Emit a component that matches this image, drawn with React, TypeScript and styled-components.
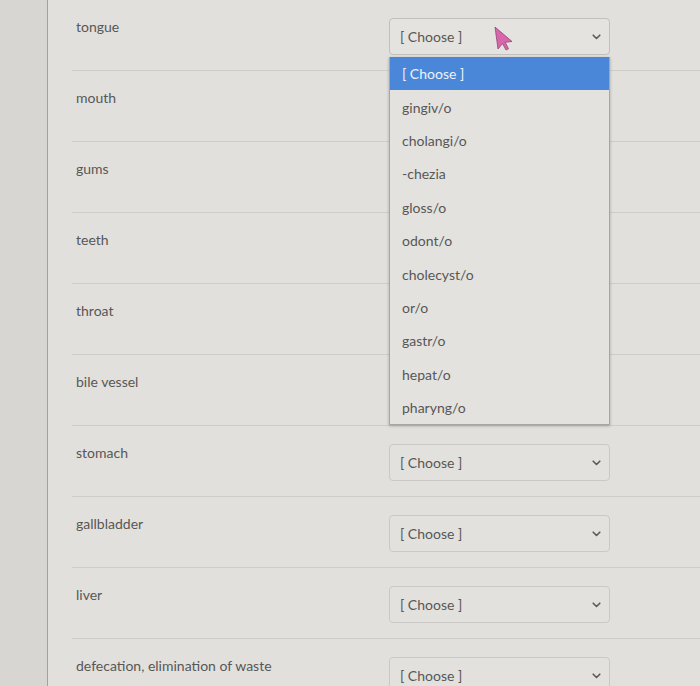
import React from "react";
import styled, {createGlobalStyle} from "styled-components";

const labels = [
    "tongue",
    "mouth",
    "gums",
    "teeth",
    "throat",
    "bile vessel",
    "stomach",
    "gallbladder",
    "liver",
    "defecation, elimination of waste",
];

const options = [
    "[ Choose ]",
    "gingiv/o",
    "cholangi/o",
    "-chezia",
    "gloss/o",
    "odont/o",
    "cholecyst/o",
    "or/o",
    "gastr/o",
    "hepat/o",
    "pharyng/o",
];

// rows whose select sits under the open list
const covered = (i: number) => i > 0 && i < 6;

const Chevron: React.FC = () => (
    <svg width="9" height="6" viewBox="0 0 9 6">
        <path d="M1.2 1.2 L4.5 4.5 L7.8 1.2" fill="none" stroke="#5a5a5a" strokeWidth="1.6" strokeLinecap="round"
              strokeLinejoin="round"/>
    </svg>
);

const Cursor: React.FC = () => (
    <CursorSvg width="20" height="26" viewBox="0 0 20 26">
        <path d="M2 1 L5 23 L9.5 17.5 L13 24 L15.5 22.8 L12.2 16.3 L19 15.5 Z" fill="#d965aa" stroke="#8a4a72"
              strokeWidth="0.8" strokeLinejoin="round"/>
    </CursorSvg>
);

export default function App() {
    return (
        <>
            <GlobalStyle/>
            <Page>
                <Gutter/>
                <Content>
                    {labels.map((label, i) => (
                        <Row key={label}>
                            <Label>{label}</Label>
                            <SelectWrap>
                                <SelectBox $open={i === 0} $hidden={covered(i)}>
                                    <span>[ Choose ]</span>
                                    <Chevron/>
                                </SelectBox>
                                {i === 0 && (
                                    <>
                                        <Cursor/>
                                        <DropList>
                                            {options.map((opt, j) => (
                                                <DropItem key={opt} $active={j === 0}>{opt}</DropItem>
                                            ))}
                                        </DropList>
                                    </>
                                )}
                            </SelectWrap>
                        </Row>
                    ))}
                </Content>
            </Page>
        </>
    );
}

const GlobalStyle = createGlobalStyle`
    html, body {
        margin: 0;
        padding: 0;
        background: #e2e0dc;
    }

    body {
        font-family: Lato, "Liberation Sans", sans-serif;
        height: 686px;
        overflow: hidden;
    }
`

const Page = styled.div`
    display: flex;
    flex-direction: row;
    height: 686px;
    background: #e2e0dc;
`

const Gutter = styled.div`
    width: 47px;
    flex-shrink: 0;
    background: #d8d6d2;
    border-right: 1px solid #a3a19d;
`

const Content = styled.div`
    flex-grow: 1;
    display: flex;
    flex-direction: column;
    padding-left: 24px;
`

const Row = styled.div`
    display: grid;
    grid-template-columns: 317px 221px 1fr;
    height: 70px;
    flex-shrink: 0;
    border-bottom: 1px solid #cfcdc9;
`

const Label = styled.div`
    padding: 17px 0 0 4px;
    font-size: 14px;
    line-height: 20px;
    color: #575757;
`

const SelectWrap = styled.div`
    position: relative;
    padding-top: 18px;
`

const SelectBox = styled.div<{ $open: boolean; $hidden: boolean }>`
    visibility: ${p => p.$hidden ? "hidden" : "visible"};
    height: 37px;
    box-sizing: border-box;
    border: 1px solid ${p => p.$open ? "#c2c0bc" : "#cbc9c5"};
    border-radius: 4px;
    background: ${p => p.$open ? "#e5e3df" : "#e3e1dd"};
    display: flex;
    align-items: center;
    justify-content: space-between;
    padding: 0 8px 0 10px;
    font-size: 14px;
    color: #575757;
`

const DropList = styled.div`
    position: absolute;
    top: 57px;
    left: 0;
    width: 221px;
    box-sizing: border-box;
    background: #e4e2de;
    border: 1px solid #a9a7a3;
    border-top: none;
    box-shadow: 0 1px 3px rgba(0, 0, 0, 0.25);
    z-index: 2;
`

const DropItem = styled.div<{ $active: boolean }>`
    height: 33.4px;
    display: flex;
    align-items: center;
    padding-left: 12px;
    font-size: 14px;
    color: ${p => p.$active ? "#eef3fb" : "#575757"};
    background: ${p => p.$active ? "#4b87d9" : "transparent"};
`

const CursorSvg = styled.svg`
    position: absolute;
    left: 104px;
    top: 26px;
    z-index: 3;
`
